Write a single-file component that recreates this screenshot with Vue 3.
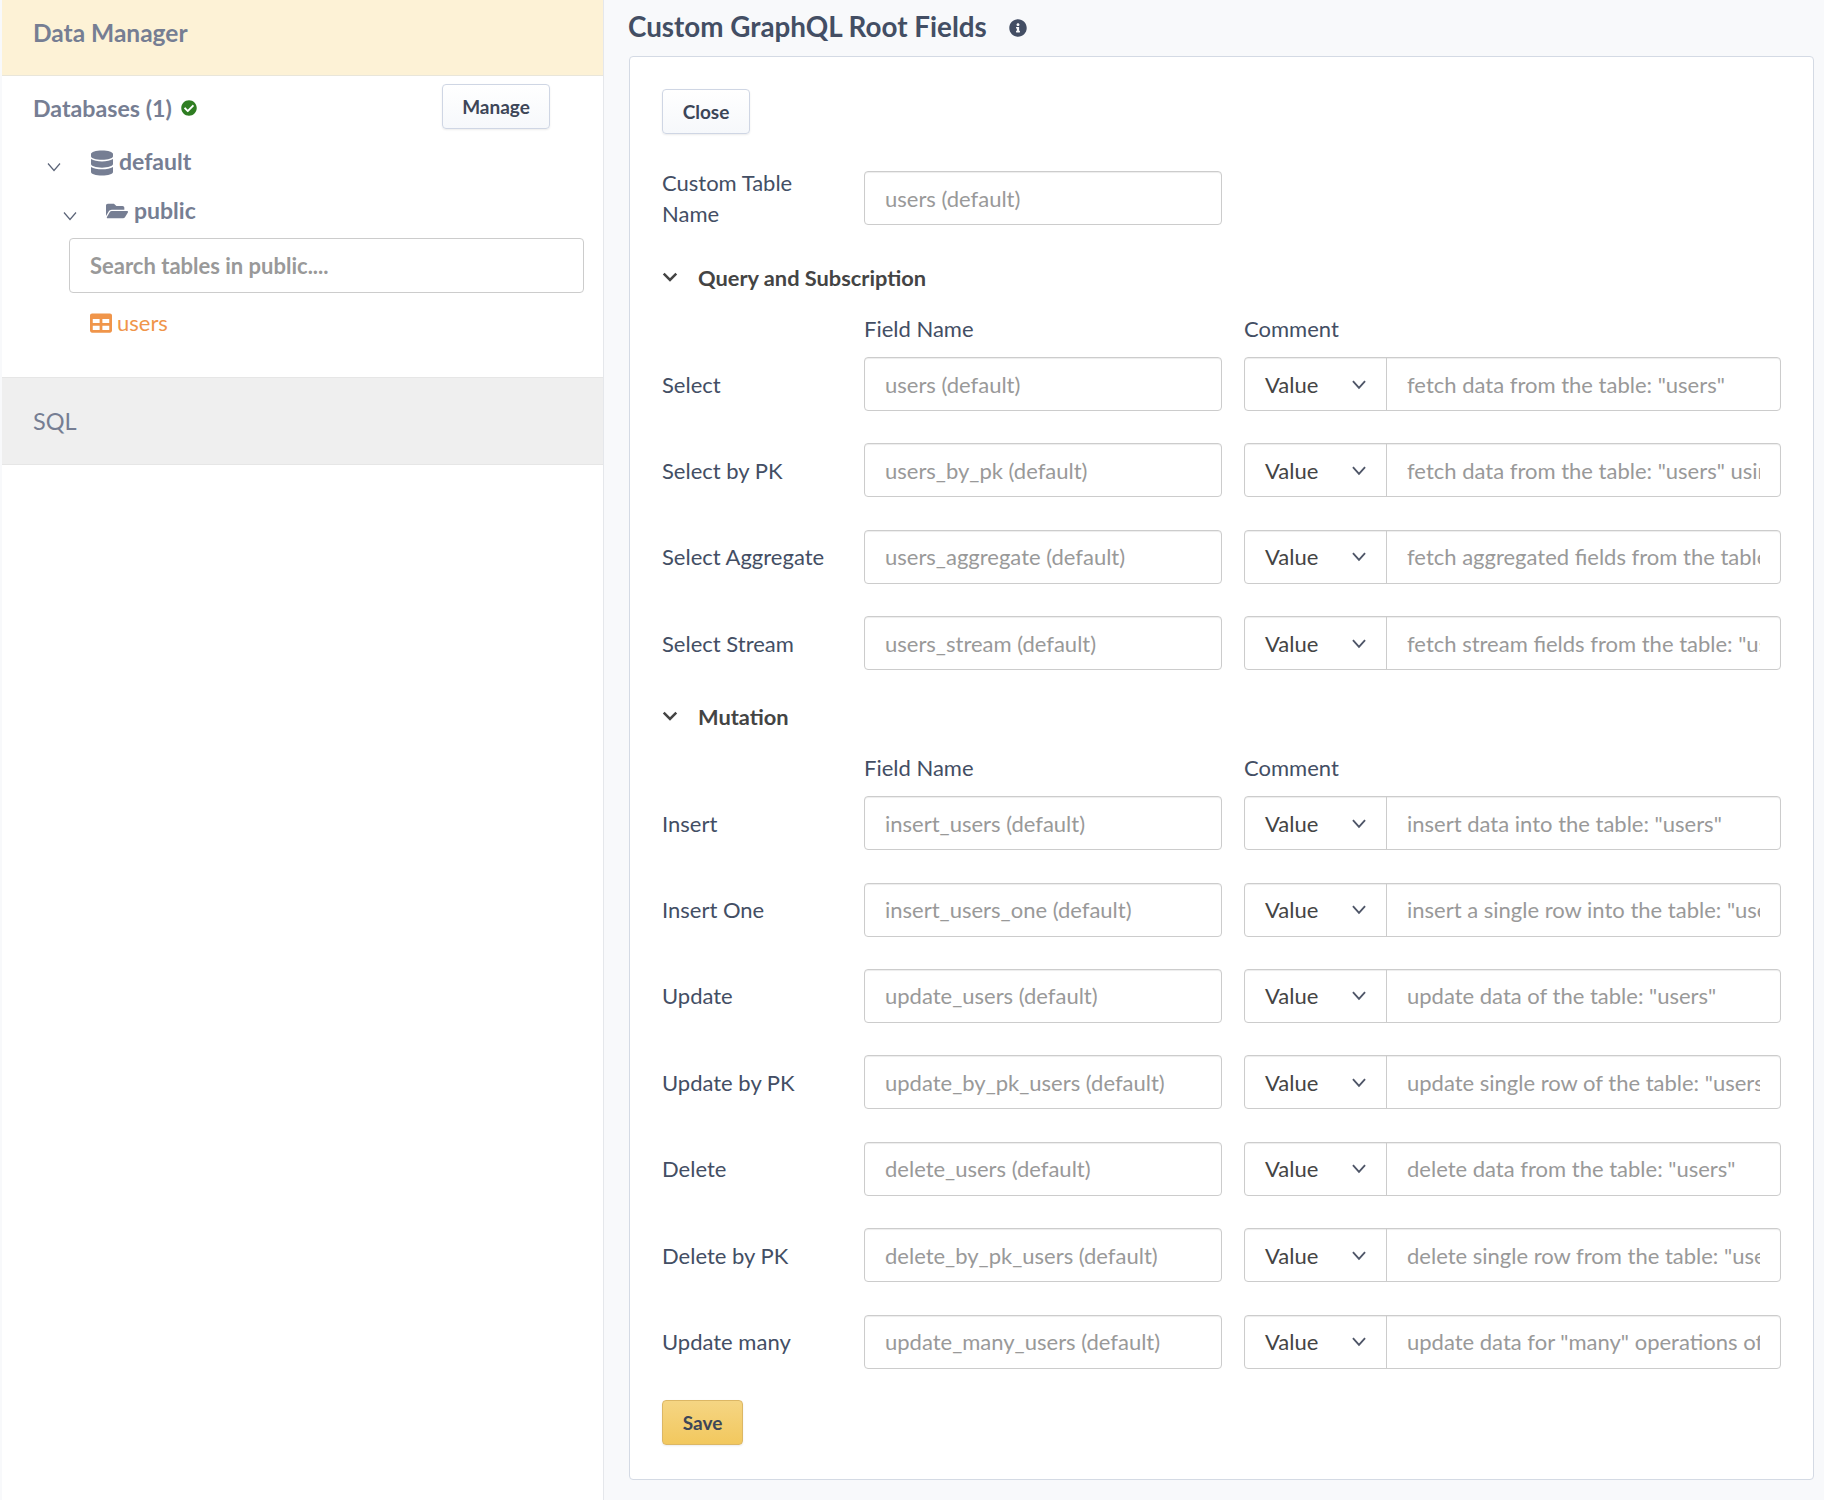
<template>
  <div class="page">
    <aside class="sidebar">
      <div class="side-head">Data Manager</div>
      <div class="side-body">
        <div class="db-row">
          <span class="db-title">Databases (1)</span>
          <svg class="ok" viewBox="0 0 512 512"><path fill="#2f7d22" :d="checkPath" /></svg>
          <button class="btn manage">Manage</button>
        </div>
        <div class="tree-row first">
          <svg class="caret" viewBox="0 0 14 10"><polyline points="1,1.5 7,8.5 13,1.5" /></svg>
          <svg class="db-icon" viewBox="0 0 448 512"><path fill="#767e93" :d="dbPath" /></svg>
          <span class="tree-text">default</span>
        </div>
        <div class="tree-row second">
          <svg class="caret" viewBox="0 0 14 10"><polyline points="1,1.5 7,8.5 13,1.5" /></svg>
          <svg class="folder" viewBox="0 0 576 512"><path fill="#767e93" :d="folderPath" /></svg>
          <span class="tree-text">public</span>
        </div>
        <input class="search" type="text" placeholder="Search tables in public...." />
        <div class="table-link">
          <svg class="table-icon" viewBox="0 0 512 512"><path fill="#f0954a" :d="tablePath" /></svg>
          <span>users</span>
        </div>
      </div>
      <div class="sql">SQL</div>
    </aside>

    <main class="content">
      <div class="title-row">
        <h2>Custom GraphQL Root Fields</h2>
        <svg class="info" viewBox="0 0 512 512"><path fill="#434e64" :d="infoPath" /></svg>
      </div>
      <section class="card">
        <button class="btn close">Close</button>

        <div class="grid custom-name">
          <label class="wrap-label">Custom Table Name</label>
          <input class="text" type="text" placeholder="users (default)" />
        </div>

        <div v-for="(group, i) in groups" :key="group.title" class="group" :class="{ later: i > 0 }">
          <div class="group-title">
            <svg viewBox="0 0 14 10"><polyline points="1.5,2 7,7.5 12.5,2" /></svg>
            <span>{{ group.title }}</span>
          </div>
          <div class="grid heads">
            <span></span>
            <span>Field Name</span>
            <span>Comment</span>
          </div>
          <div class="rows">
            <div v-for="row in group.rows" :key="row.label" class="grid">
              <label>{{ row.label }}</label>
              <input class="text" type="text" :placeholder="row.name + ' (default)'" />
              <div class="comment">
                <div class="select">
                  <span>Value</span>
                  <svg viewBox="0 0 14 10"><polyline points="1.5,2 7,8 12.5,2" /></svg>
                </div>
                <input type="text" :placeholder="row.comment" />
              </div>
            </div>
          </div>
        </div>

        <button class="btn save">Save</button>
      </section>
    </main>
  </div>
</template>

<script setup>
const checkPath = "M504 256c0 136.967-111.033 248-248 248S8 392.967 8 256 119.033 8 256 8s248 111.033 248 248zM227.314 387.314l184-184c6.248-6.248 6.248-16.379 0-22.627l-22.627-22.627c-6.248-6.249-16.379-6.249-22.628 0L216 308.118l-70.059-70.059c-6.248-6.248-16.379-6.248-22.628 0l-22.627 22.627c-6.248 6.248-6.248 16.379 0 22.627l104 104c6.249 6.25 16.379 6.25 22.628.001z"
const dbPath = "M448 73.143v45.714C448 159.143 347.667 192 224 192S0 159.143 0 118.857V73.143C0 32.857 100.333 0 224 0s224 32.857 224 73.143zM448 176v102.857C448 319.143 347.667 352 224 352S0 319.143 0 278.857V176c48.125 33.143 136.208 48.572 224 48.572S399.874 209.143 448 176zm0 160v102.857C448 479.143 347.667 512 224 512S0 479.143 0 438.857V336c48.125 33.143 136.208 48.572 224 48.572S399.874 369.143 448 336z"
const folderPath = "M572.694 292.093L500.27 416.248A63.997 63.997 0 0 1 444.989 448H45.025c-18.523 0-30.064-20.093-20.731-36.093l72.424-124.155A64 64 0 0 1 152 256h399.964c18.523 0 30.064 20.093 20.73 36.093zM152 224h328v-48c0-26.51-21.49-48-48-48H272l-64-64H48C21.49 64 0 85.49 0 112v278.046l69.077-118.418C86.214 242.25 117.989 224 152 224z"
const tablePath = "M464 32H48C21.49 32 0 53.49 0 80v352c0 26.51 21.49 48 48 48h416c26.51 0 48-21.49 48-48V80c0-26.51-21.49-48-48-48zM224 416H64v-96h160v96zm0-160H64v-96h160v96zm224 160H288v-96h160v96zm0-160H288v-96h160v96z"
const infoPath = "M256 8C119.043 8 8 119.083 8 256c0 136.997 111.043 248 248 248s248-111.003 248-248C504 119.083 392.957 8 256 8zm0 110c23.196 0 42 18.804 42 42s-18.804 42-42 42-42-18.804-42-42 18.804-42 42-42zm56 254c0 6.627-5.373 12-12 12h-88c-6.627 0-12-5.373-12-12v-24c0-6.627 5.373-12 12-12h12v-64h-12c-6.627 0-12-5.373-12-12v-24c0-6.627 5.373-12 12-12h64c6.627 0 12 5.373 12 12v100h12c6.627 0 12 5.373 12 12v24z"

const groups = [
  {
    title: "Query and Subscription",
    rows: [
      { label: "Select", name: "users", comment: 'fetch data from the table: "users"' },
      { label: "Select by PK", name: "users_by_pk", comment: 'fetch data from the table: "users" using primary key' },
      { label: "Select Aggregate", name: "users_aggregate", comment: 'fetch aggregated fields from the table: "users"' },
      { label: "Select Stream", name: "users_stream", comment: 'fetch stream fields from the table: "users"' },
    ],
  },
  {
    title: "Mutation",
    rows: [
      { label: "Insert", name: "insert_users", comment: 'insert data into the table: "users"' },
      { label: "Insert One", name: "insert_users_one", comment: 'insert a single row into the table: "users"' },
      { label: "Update", name: "update_users", comment: 'update data of the table: "users"' },
      { label: "Update by PK", name: "update_by_pk_users", comment: 'update single row of the table: "users"' },
      { label: "Delete", name: "delete_users", comment: 'delete data from the table: "users"' },
      { label: "Delete by PK", name: "delete_by_pk_users", comment: 'delete single row from the table: "users"' },
      { label: "Update many", name: "update_many_users", comment: 'update data for "many" operations of the table: "users"' },
    ],
  },
]
</script>

<style>
body {
  margin: 0;
  background: #f8f9fb;
}
</style>

<style scoped>
.page {
  display: flex;
  min-height: 1500px;
  font-family: Lato, "Open Sans", sans-serif;
  font-size: 20px;
  color: #434e64;
  background: #f8f9fb;
}
.sidebar {
  width: 601px;
  margin-left: 2px;
  background: #fff;
  border-right: 1px solid #e5e7eb;
  flex-shrink: 0;
}
.side-head {
  height: 64px;
  padding: 0 0 11px 31px;
  display: flex;
  align-items: center;
  background: #fdf2d6;
  border-bottom: 1px solid #e9e6da;
  font-size: 24.5px;
  font-weight: 700;
  color: #767e93;
}
.side-body {
  height: 301px;
  padding-left: 31px;
}
.db-row {
  display: flex;
  align-items: center;
  height: 46px;
  padding-top: 9px;
  padding-right: 53px;
}
.db-title {
  font-size: 23.2px;
  font-weight: 700;
  color: #767e93;
}
.ok {
  width: 16px;
  height: 16px;
  margin-left: 9px;
}
.manage {
  margin-left: auto;
  margin-top: -3px;
}
.tree-row {
  display: flex;
  align-items: center;
  color: #767e93;
  font-size: 23px;
  font-weight: 700;
}
.tree-row.first {
  height: 30px;
  margin-top: 15px;
  padding-left: 14px;
}
.tree-row.second {
  height: 30px;
  margin-top: 19px;
  padding-left: 30px;
}
.caret {
  width: 14px;
  height: 10px;
  margin-top: 11px;
  fill: none;
  stroke: #5b6478;
  stroke-width: 1.2;
}
.db-icon {
  width: 22px;
  height: 26px;
  margin-left: 30px;
  margin-top: 3px;
}
.folder {
  width: 22px;
  height: 20px;
  margin-left: 29px;
  margin-top: 2px;
}
.tree-text {
  margin-left: 6px;
}
.search {
  display: block;
  width: 515px;
  height: 55px;
  margin: 13px 0 0 36px;
  padding: 0 20px;
  box-sizing: border-box;
  border: 1px solid #ccc;
  border-radius: 4px;
  font: 700 22px Lato, sans-serif;
  outline: none;
}
.search::placeholder {
  color: #999;
}
.table-link {
  display: flex;
  align-items: center;
  gap: 5px;
  margin: 16px 0 0 57px;
  height: 26px;
  color: #f0954a;
  font-size: 22px;
}
.table-icon {
  width: 22px;
  height: 24px;
  margin-top: 2px;
}
.sql {
  height: 86px;
  padding-left: 31px;
  display: flex;
  align-items: center;
  background: #efefef;
  border-top: 1px solid #e6e6e6;
  border-bottom: 1px solid #e6e6e6;
  font-size: 23.5px;
  color: #767e93;
}
.content {
  flex: 1;
  min-width: 0;
  padding: 0 10px 20px 25px;
}
.title-row {
  display: flex;
  align-items: center;
  height: 56px;
  padding-bottom: 3px;
  margin-left: -1px;
  box-sizing: border-box;
}
h2 {
  margin: 0;
  font-size: 27.8px;
  font-weight: 700;
  color: #434e64;
}
.info {
  width: 18px;
  height: 18px;
  margin-left: 22px;
  margin-top: 3px;
}
.card {
  height: 1424px;
  padding: 32px 32px 0 32px;
  box-sizing: border-box;
  background: #fff;
  border: 1px solid #d4dae4;
  border-radius: 4px;
}
.btn {
  display: block;
  height: 45px;
  box-sizing: border-box;
  border: 1px solid #cfd6e4;
  border-radius: 4px;
  background: linear-gradient(#fff, #f6f8fb);
  box-shadow: 0 1px 2px rgba(0, 0, 0, 0.08);
  font: 700 19px Lato, sans-serif;
  color: #3d4658;
}
.btn.manage {
  width: 108px;
}
.btn.close {
  width: 88px;
}
.btn.save {
  width: 81px;
  margin-top: 31px;
  border-color: #dcb765;
  background: linear-gradient(#f5d583, #f2c85e);
}
.grid {
  display: grid;
  grid-template-columns: 180px 358px 537px;
  column-gap: 22px;
  align-items: center;
  font-size: 22px;
}
.custom-name {
  margin-top: 33px;
}
.wrap-label {
  line-height: 31px;
  width: 170px;
}
.group-title {
  display: flex;
  align-items: center;
  height: 30px;
  margin-top: 33px;
  font-size: 21.8px;
  font-weight: 700;
  color: #444;
}
.group.later .group-title {
  margin-top: 31px;
}
.group-title svg {
  width: 16px;
  height: 12px;
  margin-right: 20px;
  fill: none;
  stroke: #444;
  stroke-width: 2.2;
}
.heads {
  height: 30px;
  margin-top: 21px;
}
.rows {
  display: flex;
  flex-direction: column;
  gap: 32.4px;
  margin-top: 14px;
}
input {
  font-family: Lato, sans-serif;
  outline: none;
}
input::placeholder {
  color: #999;
}
.text {
  width: 100%;
  height: 54px;
  padding: 0 20px;
  box-sizing: border-box;
  border: 1px solid #ccc;
  border-radius: 4px;
  box-shadow: inset 0 1px 1px rgba(0, 0, 0, 0.075);
  font-size: 22px;
}
.comment {
  display: flex;
  height: 54px;
  box-sizing: border-box;
  border: 1px solid #ccc;
  border-radius: 4px;
  box-shadow: inset 0 1px 1px rgba(0, 0, 0, 0.075);
  overflow: hidden;
}
.select {
  width: 142px;
  flex-shrink: 0;
  display: flex;
  align-items: center;
  justify-content: space-between;
  padding: 0 19px 0 20px;
  box-sizing: border-box;
  border-right: 1px solid #ccc;
  font-size: 22px;
  color: #444;
}
.select svg {
  width: 16px;
  height: 11px;
  fill: none;
  stroke: #4f5668;
  stroke-width: 1.7;
}
.comment input {
  flex: 1;
  min-width: 0;
  padding: 0 20px;
  box-sizing: border-box;
  border: 0;
  background: transparent;
  font-size: 22px;
}
</style>
